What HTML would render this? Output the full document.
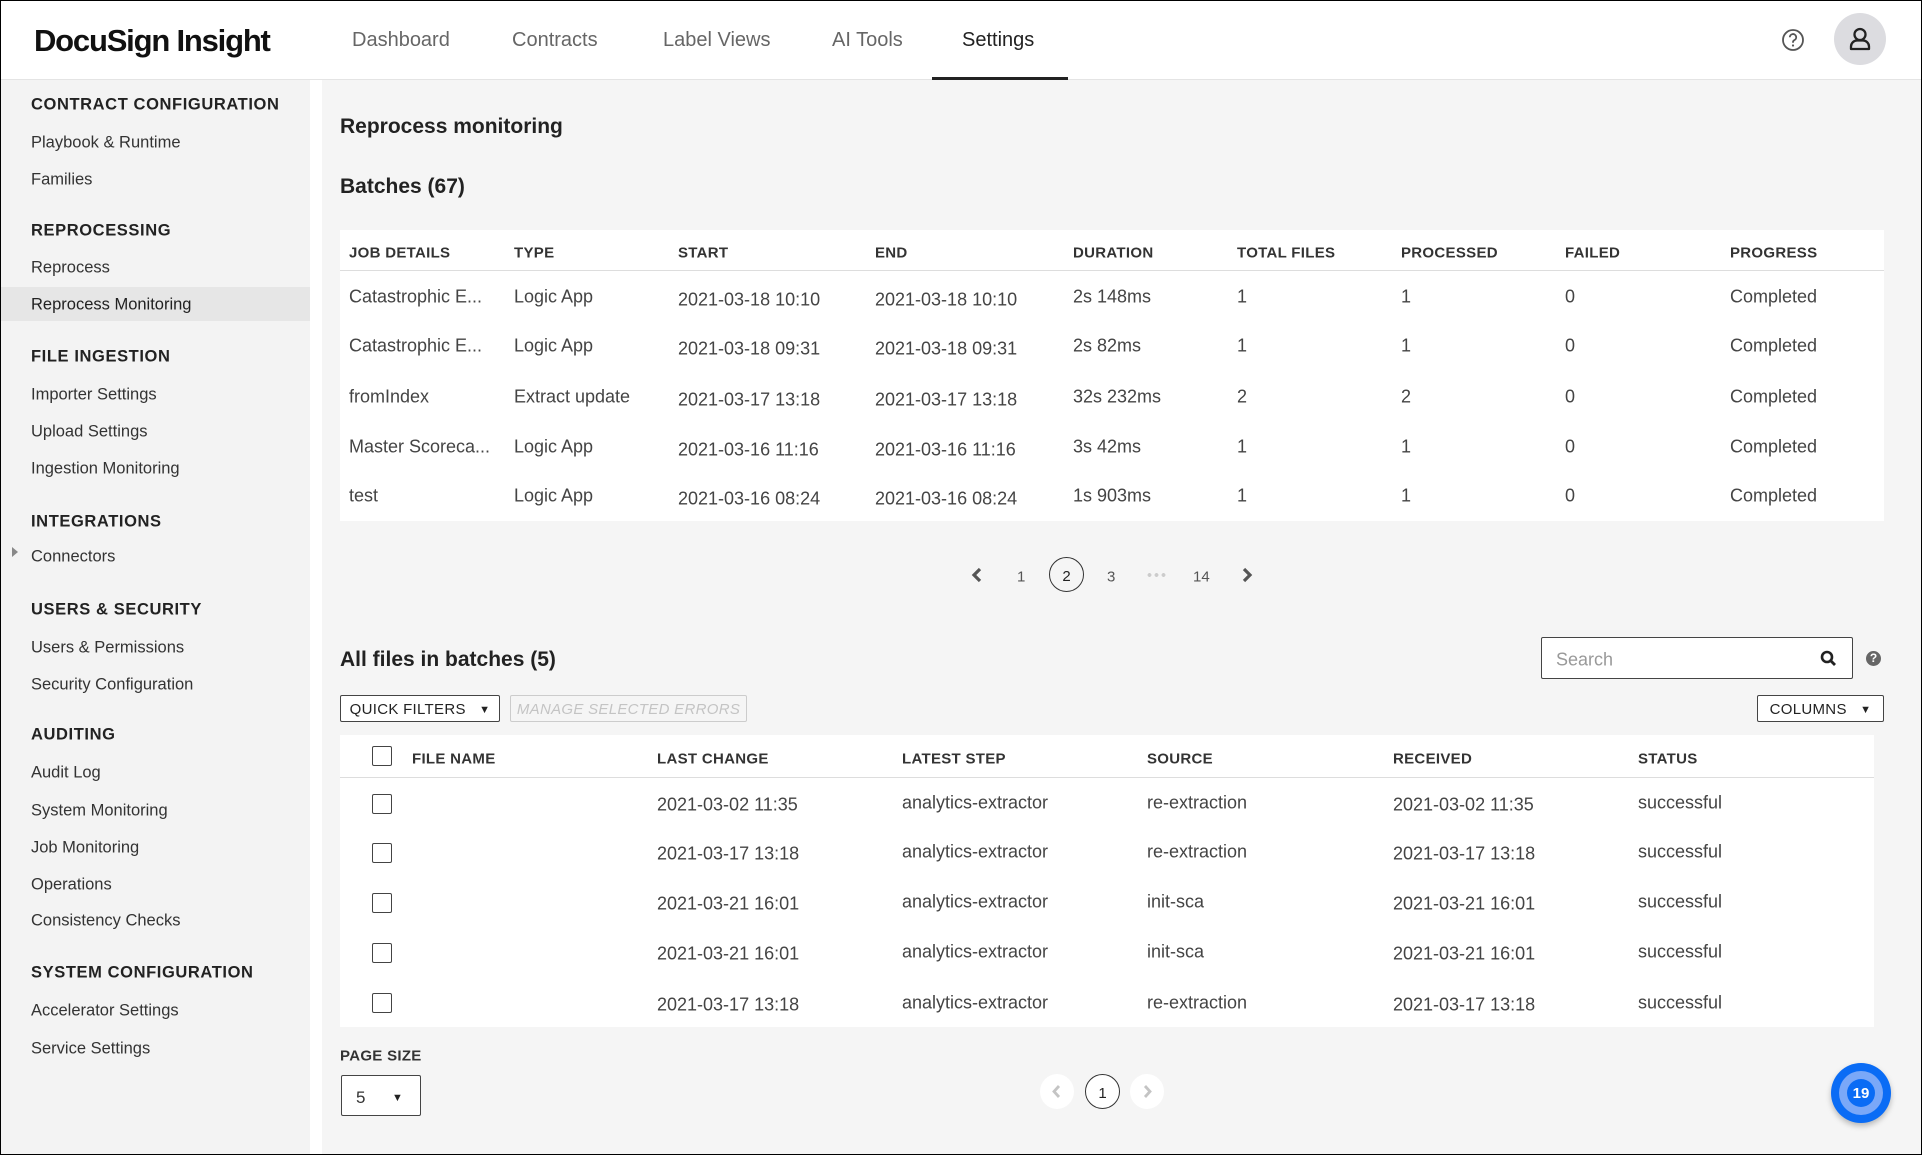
<!DOCTYPE html>
<html><head><meta charset="utf-8"><style>
*{box-sizing:border-box;margin:0;padding:0}
body{width:1922px;height:1155px;position:relative;overflow:hidden;background:#f5f5f5;font-family:"Liberation Sans",Arial,sans-serif;color:#333}
.a{position:absolute;white-space:nowrap}
#frame{position:absolute;left:0;top:0;width:1922px;height:1155px;border:1.5px solid #000;pointer-events:none;z-index:9}
.hdr{position:absolute;left:0;top:0;width:1922px;height:80px;background:#fff;border-bottom:1px solid #e4e4e4}
.nav{font-size:20px;color:#666;top:29px}
.side{position:absolute;left:0;top:80px;width:310px;height:1075px;background:#f3f3f3}
.strip{position:absolute;left:310px;top:80px;width:12px;height:1075px;background:#fff}
.sh{font-size:16.5px;letter-spacing:.6px;color:#222;left:31px;font-weight:bold;transform:translateY(calc(-50% + 2px))}
.si{font-size:16.5px;color:#333;left:31px;transform:translateY(calc(-50% + 2px))}
.t{transform:translateY(calc(-50% + 2px))}
.h2{font-size:21px;color:#222;font-weight:bold;left:340px}
.th{font-size:15px;font-weight:bold;color:#333;letter-spacing:.3px}
.td{font-size:18px;color:#444}
.box{position:absolute;background:#fff}
.cb{position:absolute;width:20px;height:20px;border:1.5px solid #444;border-radius:2px;background:#fff}
.btn{position:absolute;border:1.5px solid #444;border-radius:2px;background:#fff;font-size:15px;color:#222;display:flex;align-items:center;justify-content:center;letter-spacing:.3px}
</style></head><body>
<div class="hdr"></div>
<div class="a" style="left:34px;top:23px;font-size:31px;font-weight:bold;color:#111;letter-spacing:-1.2px">DocuSign Insight</div>
<div class="a nav" style="left:352px">Dashboard</div>
<div class="a nav" style="left:512px">Contracts</div>
<div class="a nav" style="left:663px">Label Views</div>
<div class="a nav" style="left:832px">AI Tools</div>
<div class="a nav" style="left:962px;color:#222">Settings</div>
<div class="a" style="left:932px;top:77px;width:136px;height:3px;background:#222"></div>
<svg class="a" style="left:1781px;top:28px" width="24" height="24" viewBox="0 0 24 24"><circle cx="12" cy="12" r="10" fill="none" stroke="#555" stroke-width="1.8"/><path d="M8.8 9.3a3.2 3.2 0 1 1 4.5 2.9c-.9.4-1.3 1-1.3 2v.6" fill="none" stroke="#555" stroke-width="1.8"/><circle cx="12" cy="17.5" r="1.1" fill="#555"/></svg>
<div class="a" style="left:1834px;top:13px;width:52px;height:52px;border-radius:50%;background:#dcdce0"></div>
<svg class="a" style="left:1847px;top:26px" width="26" height="26" viewBox="0 0 26 26"><circle cx="13" cy="8.5" r="5.5" fill="none" stroke="#222" stroke-width="2.3"/><path d="M4 23v-2.5a6 6 0 0 1 6-6h6a6 6 0 0 1 6 6V23z" fill="none" stroke="#222" stroke-width="2.3" stroke-linejoin="round"/></svg>

<div class="side"></div>
<div class="strip"></div>
<div class="a" style="left:0;top:287px;width:310px;height:34px;background:#e6e6e6"></div>
<div class="a sh" style="top:103px">CONTRACT CONFIGURATION</div>
<div class="a si" style="top:141px">Playbook &amp; Runtime</div>
<div class="a si" style="top:178px">Families</div>
<div class="a sh" style="top:229px">REPROCESSING</div>
<div class="a si" style="top:266px">Reprocess</div>
<div class="a si" style="top:303px;color:#222">Reprocess Monitoring</div>
<div class="a sh" style="top:355px">FILE INGESTION</div>
<div class="a si" style="top:393px">Importer Settings</div>
<div class="a si" style="top:430px">Upload Settings</div>
<div class="a si" style="top:467px">Ingestion Monitoring</div>
<div class="a sh" style="top:520px">INTEGRATIONS</div>
<div class="a" style="left:12px;top:547px;width:0;height:0;border-left:6px solid #888;border-top:5px solid transparent;border-bottom:5px solid transparent"></div>
<div class="a si" style="top:555px">Connectors</div>
<div class="a sh" style="top:608px">USERS &amp; SECURITY</div>
<div class="a si" style="top:646px">Users &amp; Permissions</div>
<div class="a si" style="top:683px">Security Configuration</div>
<div class="a sh" style="top:733px">AUDITING</div>
<div class="a si" style="top:771px">Audit Log</div>
<div class="a si" style="top:809px">System Monitoring</div>
<div class="a si" style="top:846px">Job Monitoring</div>
<div class="a si" style="top:883px">Operations</div>
<div class="a si" style="top:919px">Consistency Checks</div>
<div class="a sh" style="top:971px">SYSTEM CONFIGURATION</div>
<div class="a si" style="top:1009px">Accelerator Settings</div>
<div class="a si" style="top:1047px">Service Settings</div>

<div class="a h2 t" style="top:125px">Reprocess monitoring</div>
<div class="a h2 t" style="top:185px">Batches (67)</div>

<div class="box" style="left:340px;top:230px;width:1544px;height:291px"></div>
<div class="a" style="left:340px;top:270px;width:1544px;height:1px;background:#ddd"></div>
<div class="a th t" style="left:349px;top:251px">JOB DETAILS</div>
<div class="a th t" style="left:514px;top:251px">TYPE</div>
<div class="a th t" style="left:678px;top:251px">START</div>
<div class="a th t" style="left:875px;top:251px">END</div>
<div class="a th t" style="left:1073px;top:251px">DURATION</div>
<div class="a th t" style="left:1237px;top:251px">TOTAL FILES</div>
<div class="a th t" style="left:1401px;top:251px">PROCESSED</div>
<div class="a th t" style="left:1565px;top:251px">FAILED</div>
<div class="a th t" style="left:1730px;top:251px">PROGRESS</div>

<div class="a td t" style="left:349px;top:295px">Catastrophic E...</div><div class="a td t" style="left:514px;top:295px">Logic App</div><div class="a td t" style="left:678px;top:298px">2021-03-18 10:10</div><div class="a td t" style="left:875px;top:298px">2021-03-18 10:10</div><div class="a td t" style="left:1073px;top:295px">2s 148ms</div><div class="a td t" style="left:1237px;top:295px">1</div><div class="a td t" style="left:1401px;top:295px">1</div><div class="a td t" style="left:1565px;top:295px">0</div><div class="a td t" style="left:1730px;top:295px">Completed</div>

<div class="a td t" style="left:349px;top:344px">Catastrophic E...</div><div class="a td t" style="left:514px;top:344px">Logic App</div><div class="a td t" style="left:678px;top:347px">2021-03-18 09:31</div><div class="a td t" style="left:875px;top:347px">2021-03-18 09:31</div><div class="a td t" style="left:1073px;top:344px">2s 82ms</div><div class="a td t" style="left:1237px;top:344px">1</div><div class="a td t" style="left:1401px;top:344px">1</div><div class="a td t" style="left:1565px;top:344px">0</div><div class="a td t" style="left:1730px;top:344px">Completed</div>

<div class="a td t" style="left:349px;top:395px">fromIndex</div><div class="a td t" style="left:514px;top:395px">Extract update</div><div class="a td t" style="left:678px;top:398px">2021-03-17 13:18</div><div class="a td t" style="left:875px;top:398px">2021-03-17 13:18</div><div class="a td t" style="left:1073px;top:395px">32s 232ms</div><div class="a td t" style="left:1237px;top:395px">2</div><div class="a td t" style="left:1401px;top:395px">2</div><div class="a td t" style="left:1565px;top:395px">0</div><div class="a td t" style="left:1730px;top:395px">Completed</div>

<div class="a td t" style="left:349px;top:445px">Master Scoreca...</div><div class="a td t" style="left:514px;top:445px">Logic App</div><div class="a td t" style="left:678px;top:448px">2021-03-16 11:16</div><div class="a td t" style="left:875px;top:448px">2021-03-16 11:16</div><div class="a td t" style="left:1073px;top:445px">3s 42ms</div><div class="a td t" style="left:1237px;top:445px">1</div><div class="a td t" style="left:1401px;top:445px">1</div><div class="a td t" style="left:1565px;top:445px">0</div><div class="a td t" style="left:1730px;top:445px">Completed</div>

<div class="a td t" style="left:349px;top:494px">test</div><div class="a td t" style="left:514px;top:494px">Logic App</div><div class="a td t" style="left:678px;top:497px">2021-03-16 08:24</div><div class="a td t" style="left:875px;top:497px">2021-03-16 08:24</div><div class="a td t" style="left:1073px;top:494px">1s 903ms</div><div class="a td t" style="left:1237px;top:494px">1</div><div class="a td t" style="left:1401px;top:494px">1</div><div class="a td t" style="left:1565px;top:494px">0</div><div class="a td t" style="left:1730px;top:494px">Completed</div>

<svg class="a" style="left:970px;top:566px" width="14" height="18" viewBox="0 0 14 18"><path d="M10 3 4 9l6 6" fill="none" stroke="#555" stroke-width="3.2"/></svg>
<div class="a t" style="left:1017px;top:575px;font-size:15px;color:#555">1</div>
<div class="a" style="left:1049px;top:557px;width:35px;height:35px;border:1.3px solid #333;border-radius:50%;font-size:15px;color:#222;display:flex;align-items:center;justify-content:center;padding-top:3px">2</div>
<div class="a t" style="left:1107px;top:575px;font-size:15px;color:#555">3</div>
<div class="a" style="left:1146px;top:573px;width:20px;height:4px;background:radial-gradient(circle,#ccc 1.8px,transparent 2px) 0 0/7px 4px repeat-x"></div>
<div class="a t" style="left:1193px;top:575px;font-size:15px;color:#555">14</div>
<svg class="a" style="left:1240px;top:566px" width="14" height="18" viewBox="0 0 14 18"><path d="M4 3l6 6-6 6" fill="none" stroke="#555" stroke-width="3.2"/></svg>

<div class="a h2 t" style="top:658px">All files in batches (5)</div>
<div class="a" style="left:1541px;top:637px;width:312px;height:42px;border:1.5px solid #444;border-radius:2px;background:#fff"></div>
<div class="a t" style="left:1556px;top:658px;font-size:18px;color:#999">Search</div>
<svg class="a" style="left:1820px;top:650px" width="17" height="17" viewBox="0 0 17 17"><circle cx="7" cy="7" r="5" fill="none" stroke="#222" stroke-width="2.6"/><path d="M10.5 10.5 15 15" stroke="#222" stroke-width="2.8"/></svg>
<div class="a" style="left:1866px;top:651px;width:15px;height:15px;border-radius:50%;background:#666;color:#fff;font-size:12px;font-weight:bold;text-align:center;line-height:15px">?</div>

<div class="btn" style="left:340px;top:695px;width:160px;height:27px;padding-top:2px">QUICK FILTERS&nbsp;&nbsp;&nbsp;<span style="font-size:11px">▼</span></div>
<div class="btn" style="left:510px;top:695px;width:237px;height:27px;border-color:#ccc;color:#c4c4c4;font-style:italic;background:#f5f5f5;padding-top:2px">MANAGE SELECTED ERRORS</div>
<div class="btn" style="left:1757px;top:695px;width:127px;height:27px;padding-top:2px">COLUMNS&nbsp;&nbsp;&nbsp;<span style="font-size:11px">▼</span></div>

<div class="box" style="left:340px;top:735px;width:1534px;height:292px"></div>
<div class="a" style="left:340px;top:777px;width:1534px;height:1px;background:#ddd"></div>
<div class="cb" style="left:372px;top:746px"></div>
<div class="a th t" style="left:412px;top:757px">FILE NAME</div>
<div class="a th t" style="left:657px;top:757px">LAST CHANGE</div>
<div class="a th t" style="left:902px;top:757px">LATEST STEP</div>
<div class="a th t" style="left:1147px;top:757px">SOURCE</div>
<div class="a th t" style="left:1393px;top:757px">RECEIVED</div>
<div class="a th t" style="left:1638px;top:757px">STATUS</div>

<div class="cb" style="left:372px;top:794px"></div><div class="a td t" style="left:657px;top:803px">2021-03-02 11:35</div><div class="a td t" style="left:902px;top:801px">analytics-extractor</div><div class="a td t" style="left:1147px;top:801px">re-extraction</div><div class="a td t" style="left:1393px;top:803px">2021-03-02 11:35</div><div class="a td t" style="left:1638px;top:801px">successful</div>
<div class="cb" style="left:372px;top:843px"></div><div class="a td t" style="left:657px;top:852px">2021-03-17 13:18</div><div class="a td t" style="left:902px;top:850px">analytics-extractor</div><div class="a td t" style="left:1147px;top:850px">re-extraction</div><div class="a td t" style="left:1393px;top:852px">2021-03-17 13:18</div><div class="a td t" style="left:1638px;top:850px">successful</div>
<div class="cb" style="left:372px;top:893px"></div><div class="a td t" style="left:657px;top:902px">2021-03-21 16:01</div><div class="a td t" style="left:902px;top:900px">analytics-extractor</div><div class="a td t" style="left:1147px;top:900px">init-sca</div><div class="a td t" style="left:1393px;top:902px">2021-03-21 16:01</div><div class="a td t" style="left:1638px;top:900px">successful</div>
<div class="cb" style="left:372px;top:943px"></div><div class="a td t" style="left:657px;top:952px">2021-03-21 16:01</div><div class="a td t" style="left:902px;top:950px">analytics-extractor</div><div class="a td t" style="left:1147px;top:950px">init-sca</div><div class="a td t" style="left:1393px;top:952px">2021-03-21 16:01</div><div class="a td t" style="left:1638px;top:950px">successful</div>
<div class="cb" style="left:372px;top:993px"></div><div class="a td t" style="left:657px;top:1003px">2021-03-17 13:18</div><div class="a td t" style="left:902px;top:1001px">analytics-extractor</div><div class="a td t" style="left:1147px;top:1001px">re-extraction</div><div class="a td t" style="left:1393px;top:1003px">2021-03-17 13:18</div><div class="a td t" style="left:1638px;top:1001px">successful</div>

<div class="a th t" style="left:340px;top:1054px">PAGE SIZE</div>
<div class="a" style="left:341px;top:1075px;width:80px;height:41px;border:1.5px solid #444;border-radius:2px;background:#fff"></div>
<div class="a t" style="left:356px;top:1096px;font-size:17px;color:#333">5</div>
<div class="a t" style="left:392px;top:1096px;font-size:11px;color:#222">▼</div>

<div class="a" style="left:1040px;top:1074px;width:34px;height:35px;border-radius:50%;background:#fff"></div>
<svg class="a" style="left:1050px;top:1083px" width="14" height="17" viewBox="0 0 14 17"><path d="M9 3 4 8.5 9 14" fill="none" stroke="#c4c4c4" stroke-width="2.8"/></svg>
<div class="a" style="left:1085px;top:1074px;width:35px;height:35px;border:1.3px solid #333;border-radius:50%;font-size:15px;color:#222;display:flex;align-items:center;justify-content:center;background:#fff;padding-top:3px">1</div>
<div class="a" style="left:1130px;top:1074px;width:34px;height:35px;border-radius:50%;background:#fff"></div>
<svg class="a" style="left:1140px;top:1083px" width="14" height="17" viewBox="0 0 14 17"><path d="M5 3l5 5.5L5 14" fill="none" stroke="#c4c4c4" stroke-width="2.8"/></svg>

<div class="a" style="left:1831px;top:1063px;width:60px;height:60px;border-radius:50%;background:#0a6cf5;box-shadow:0 3px 6px rgba(0,0,0,.25)"></div>
<div class="a" style="left:1839px;top:1071px;width:44px;height:44px;border-radius:50%;background:#7aa8f8"></div>
<div class="a" style="left:1847px;top:1079px;width:28px;height:28px;border-radius:50%;background:#0a6cf5;color:#fff;font-size:15px;font-weight:bold;text-align:center;line-height:30px">19</div>
<div id="frame"></div>
</body></html>
